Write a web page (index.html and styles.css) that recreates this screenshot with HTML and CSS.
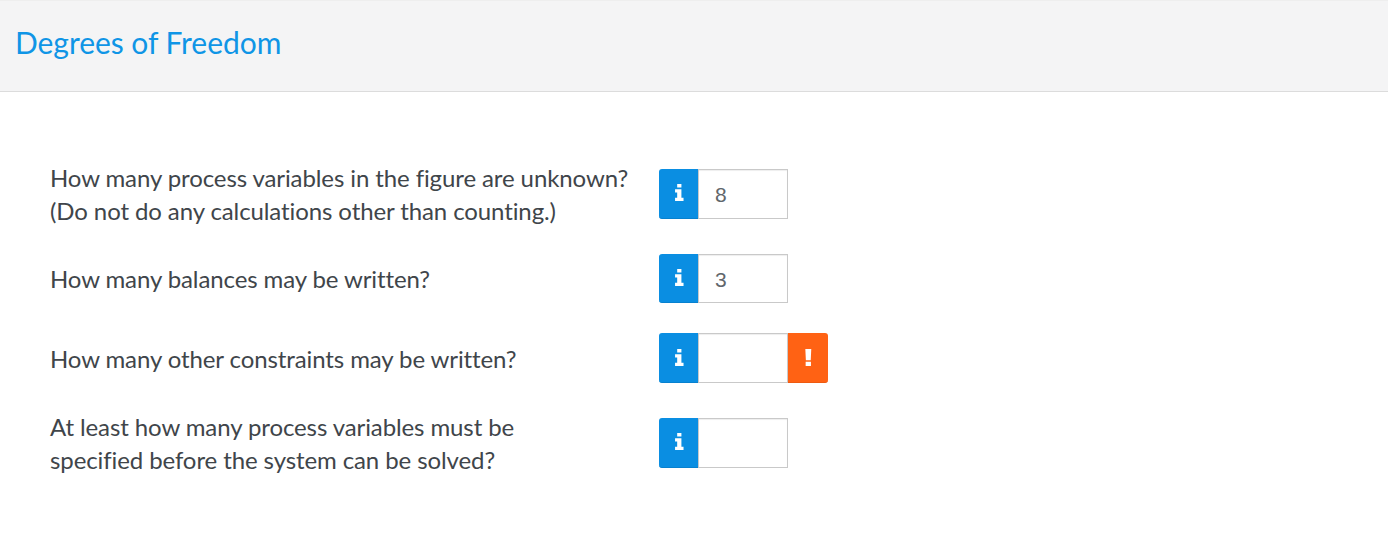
FILE: index.html
```html
<!DOCTYPE html>
<html lang="en">
<head>
<meta charset="utf-8">
<title>Degrees of Freedom</title>
<link rel="stylesheet" href="styles.css">
</head>
<body>
<header class="header"><h1 class="title">Degrees of Freedom</h1></header>
<main class="form">
  <div class="row row-one">
    <p class="question">How many process variables in the figure are unknown?<br>(Do not do any calculations other than counting.)</p>
    <div class="field">
      <span class="addon info"><svg class="icon" viewBox="0 0 10 16"><path d="M3 0h4v3.200H3zM1 5h6v8h2v3H1v-3h2V8H1z"/></svg></span>
      <span class="input">8</span>
    </div>
  </div>
  <div class="row row-two">
    <p class="question">How many balances may be written?</p>
    <div class="field field-short">
      <span class="addon info"><svg class="icon" viewBox="0 0 10 16"><path d="M3 0h4v3.200H3zM1 5h6v8h2v3H1v-3h2V8H1z"/></svg></span>
      <span class="input">3</span>
    </div>
  </div>
  <div class="row row-three">
    <p class="question">How many other constraints may be written?</p>
    <div class="field">
      <span class="addon info info-low"><svg class="icon" viewBox="0 0 10 16"><path d="M3 0h4v3.200H3zM1 5h6v8h2v3H1v-3h2V8H1z"/></svg></span>
      <span class="input"></span>
      <span class="addon warn"><svg class="icon" viewBox="0 0 10 16"><path d="M2.200 0h5.600L7.300 10.500H2.700zM2.500 12h5v4h-5z"/></svg></span>
    </div>
  </div>
  <div class="row row-four">
    <p class="question">At least how many process variables must be<br>specified before the system can be solved?</p>
    <div class="field">
      <span class="addon info"><svg class="icon" viewBox="0 0 10 16"><path d="M3 0h4v3.200H3zM1 5h6v8h2v3H1v-3h2V8H1z"/></svg></span>
      <span class="input"></span>
    </div>
  </div>
</main>
</body>
</html>
```
FILE: styles.css
```css
* { box-sizing: border-box; }
html, body { margin: 0; padding: 0; background: #fff; }
body { font-family: Lato, "Open Sans", sans-serif; color: #40454a; }
.header {
  height: 92px;
  background: #f4f4f5;
  border-top: 1px solid #eeeeee;
  border-bottom: 1px solid #dcdcdc;
  display: flex;
  align-items: center;
  padding: 0 0 8px 16px;
}
.title { margin: 0 0 0 -1px; font-size: 30px; font-weight: 400; color: #0f95e6; line-height: 1; letter-spacing: -0.05px; }
.form { padding: 69px 0 0 50px; display: flex; flex-direction: column; }
.row { display: grid; grid-template-columns: 609px auto; align-items: center; justify-content: start; }
.row-two { margin-top: 27px; }
.row-three { margin-top: 30px; }
.row-four { margin-top: 27px; }
.question { margin: 0; font-size: 24px; line-height: 33px; font-weight: 400; letter-spacing: -0.1px; }
.field { display: flex; height: 50px; }
.field-short { height: 49px; }
.addon { width: 40px; display: flex; align-items: flex-start; justify-content: center; padding-top: 15px; color: #fff; }
.info { width: 39px; padding-left: 1px; background: #0a8ee2; border-radius: 3px 0 0 3px; border-bottom: 1px solid #0781cf; }
.info-low { padding-top: 16px; }
.warn { background: #ff6214; border-radius: 0 3px 3px 0; border-bottom: 1px solid #ee5a10; padding-top: 16px; }
.icon { width: 10.6px; height: 17px; fill: #fff; display: block; }
.input {
  width: 90px;
  border: 1px solid #c9c9c9;
  background: #fff;
  box-shadow: inset 0 1px 1px rgba(0,0,0,.07);
  font-family: "Liberation Sans", Arial, sans-serif;
  font-size: 21px;
  color: #61666b;
  line-height: 50px;
  padding-left: 16px;
}
```
